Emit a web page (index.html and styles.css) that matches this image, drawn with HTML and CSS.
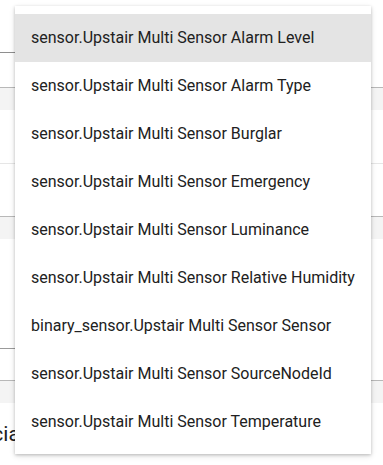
FILE: index.html
```html
<!DOCTYPE html>
<html lang="en">
<head>
    <meta charset="UTF-8">
    <meta name="viewport" content="width=device-width, initial-scale=1.0">
    <title>Entity picker</title>
    <link rel="stylesheet" href="styles.css">
</head>
<body>

<div class="page">
    <div class="section first">
        <div class="field"></div>
    </div>
    <div class="band"></div>
    <div class="section second">
        <div class="divider"></div>
    </div>
    <div class="band"></div>
    <div class="section third">
        <div class="field"></div>
    </div>
    <div class="band"></div>
    <div class="section fourth">
        <h2 class="title">Associations</h2>
    </div>
</div>

<div class="menu">
    <div class="menu-item selected">sensor.Upstair Multi Sensor Alarm Level</div>
    <div class="menu-item">sensor.Upstair Multi Sensor Alarm Type</div>
    <div class="menu-item">sensor.Upstair Multi Sensor Burglar</div>
    <div class="menu-item">sensor.Upstair Multi Sensor Emergency</div>
    <div class="menu-item">sensor.Upstair Multi Sensor Luminance</div>
    <div class="menu-item">sensor.Upstair Multi Sensor Relative Humidity</div>
    <div class="menu-item">binary_sensor.Upstair Multi Sensor Sensor</div>
    <div class="menu-item">sensor.Upstair Multi Sensor SourceNodeId</div>
    <div class="menu-item">sensor.Upstair Multi Sensor Temperature</div>
</div>

</body>
</html>
```

FILE: styles.css
```css
/* Page behind the dropdown */
body {
    margin: 0;
    font-family: Roboto, "Liberation Sans", sans-serif;
    background-color: #fff;
    overflow: hidden;
}
.page {
    width: 383px;
}
.section {
    background-color: #fff;
    box-sizing: border-box;
    overflow: hidden;
}
.section.first {
    height: 87px;
    padding-top: 52px;
}
.section.second {
    height: 106px;
    padding-top: 53px;
}
.section.third {
    height: 141px;
    padding-top: 109px;
}
.section.fourth {
    height: 62px;
    padding-top: 19px;
}
.first .field {
    width: 200px;
    border-bottom: 1px solid #8f8f8f;
}
.second .divider {
    border-bottom: 1px solid #e6e6e6;
}
.third .field {
    width: 200px;
    border-bottom: 1px solid #9a9a9a;
}
.band {
    height: 22px;
    border-top: 1px solid #b8b8b8;
    background-color: #f4f4f4;
}
.title {
    margin: 0 0 0 -55px;
    font-size: 21px;
    line-height: 24px;
    font-weight: 400;
    color: #212121;
    white-space: nowrap;
}

/* Dropdown menu */
.menu {
    position: absolute;
    top: 6px;
    left: 15px;
    width: 356px;
    padding: 8px 0;
    background-color: #fff;
    box-shadow: 0 1px 3px rgba(0, 0, 0, 0.2), 0 2px 6px rgba(0, 0, 0, 0.12);
}
.menu-item {
    height: 48px;
    line-height: 48px;
    padding: 0 16px;
    font-size: 16px;
    color: #212121;
    white-space: nowrap;
}
.menu-item.selected {
    background-color: #e4e4e4;
}
```
